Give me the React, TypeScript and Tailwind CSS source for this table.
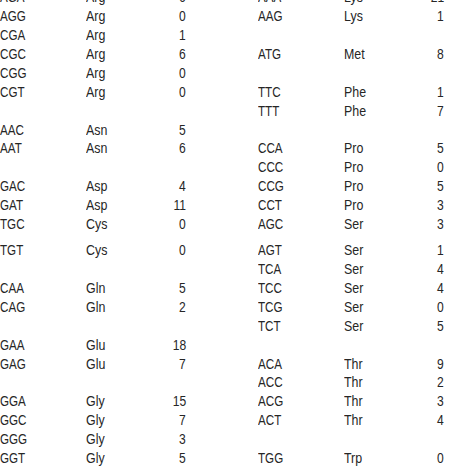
type Cell = [string, string, string] | null;

// each row: left entry, right entry
const rows: [Cell, Cell][] = [
  [["AGA", "Arg", "6"], ["AAA", "Lys", "21"]],
  [["AGG", "Arg", "0"], ["AAG", "Lys", "1"]],
  [["CGA", "Arg", "1"], null],
  [["CGC", "Arg", "6"], ["ATG", "Met", "8"]],
  [["CGG", "Arg", "0"], null],
  [["CGT", "Arg", "0"], ["TTC", "Phe", "1"]],
  [null, ["TTT", "Phe", "7"]],
  [["AAC", "Asn", "5"], null],
  [["AAT", "Asn", "6"], ["CCA", "Pro", "5"]],
  [null, ["CCC", "Pro", "0"]],
  [["GAC", "Asp", "4"], ["CCG", "Pro", "5"]],
  [["GAT", "Asp", "11"], ["CCT", "Pro", "3"]],
  [["TGC", "Cys", "0"], ["AGC", "Ser", "3"]],
];

const rows2: [Cell, Cell][] = [
  [["TGT", "Cys", "0"], ["AGT", "Ser", "1"]],
  [null, ["TCA", "Ser", "4"]],
  [["CAA", "Gln", "5"], ["TCC", "Ser", "4"]],
  [["CAG", "Gln", "2"], ["TCG", "Ser", "0"]],
  [null, ["TCT", "Ser", "5"]],
  [["GAA", "Glu", "18"], null],
  [["GAG", "Glu", "7"], ["ACA", "Thr", "9"]],
  [null, ["ACC", "Thr", "2"]],
  [["GGA", "Gly", "15"], ["ACG", "Thr", "3"]],
  [["GGC", "Gly", "7"], ["ACT", "Thr", "4"]],
  [["GGG", "Gly", "3"], null],
  [["GGT", "Gly", "5"], ["TGG", "Trp", "0"]],
];

// condensed look: Liberation Sans squeezed horizontally
function Entry({ cell }: { cell: Cell }) {
  return (
    <>
      <span>
        <span className="inline-block origin-left scale-x-[0.75]">{cell?.[0]}</span>
      </span>
      <span>
        <span className="inline-block origin-left scale-x-[0.8]">{cell?.[1]}</span>
      </span>
      <span className="text-right">
        <span className="inline-block origin-right scale-x-[0.78]">{cell?.[2]}</span>
      </span>
    </>
  );
}

function Row({ r }: { r: [Cell, Cell] }) {
  return (
    <div className="grid h-[18.9px] grid-cols-[86px_70px_30px_72px_86px_70px_30px] items-center leading-none">
      <Entry cell={r[0]} />
      <span />
      <Entry cell={r[1]} />
    </div>
  );
}

export default function App() {
  return (
    <div className="h-[474px] w-[474px] overflow-hidden bg-white text-[#262626] text-[15.5px] [font-family:'Liberation_Sans',Arial,sans-serif]">
      <div className="-mt-[12.4px] flex flex-col">
        {rows.map((r, i) => (
          <Row key={i} r={r} />
        ))}
        <div className="mt-[7.3px] flex flex-col">
          {rows2.map((r, i) => (
            <Row key={i} r={r} />
          ))}
        </div>
      </div>
    </div>
  );
}
